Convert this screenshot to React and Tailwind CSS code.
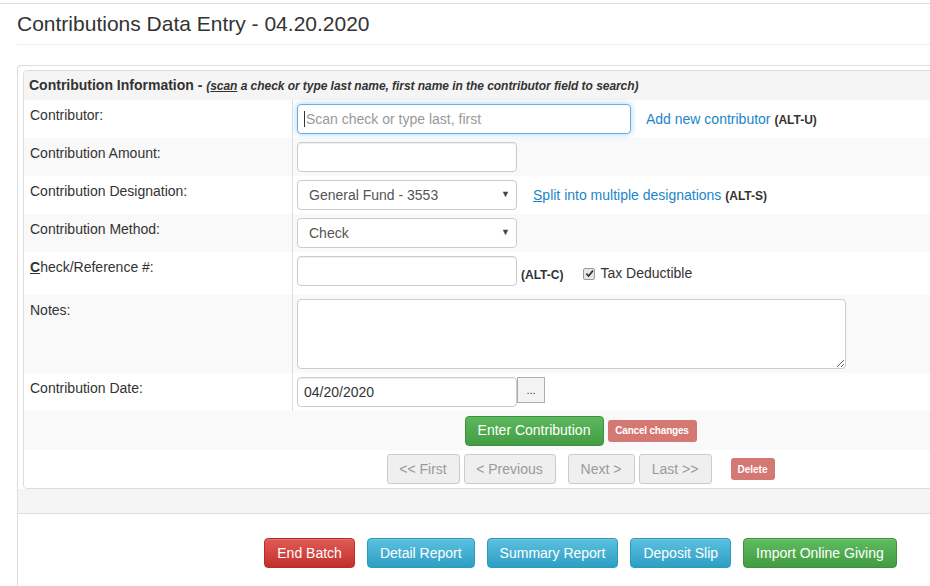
const font = { fontFamily: '"Liberation Sans", Arial, sans-serif' };

function Label({ children }) {
  return (
    <div className="w-[269px] shrink-0 border-r border-[#dddddd] pl-[6px] pt-[5px] text-[14px] leading-[20px] text-[#333]">
      {children}
    </div>
  );
}

function Row({ striped, h, label, children }) {
  return (
    <div className={`flex ${h} ${striped ? "bg-[#f9f9f9]" : "bg-white"}`}>
      <Label>{label}</Label>
      <div className="flex flex-1 items-start pl-[4px] pt-[4px]">{children}</div>
    </div>
  );
}

function Input({ w = "w-[220px]", value, className = "" }) {
  return (
    <div
      className={`${w} h-[30px] shrink-0 rounded-[4px] border border-[#cccccc] bg-white px-[6px] text-[14px] leading-[28px] text-[#333] shadow-[inset_0_1px_1px_rgba(0,0,0,0.075)] ${className}`}
    >
      {value}
    </div>
  );
}

function Select({ value }) {
  return (
    <div className="flex h-[30px] w-[220px] shrink-0 items-center justify-between rounded-[4px] border border-[#cccccc] bg-white pl-[11px] pr-[6px] text-[14px] text-[#555]">
      <span>{value}</span>
      <span className="text-[9px] text-[#444]">▼</span>
    </div>
  );
}

function Alt({ children }) {
  return <span className="text-[12px] font-bold text-[#333]">{children}</span>;
}

function NavBtn({ children, w }) {
  return (
    <div
      className={`${w} flex h-[30px] items-center justify-center rounded-[3px] border border-[#cccccc] bg-[#efefef] text-[14px] text-[#9a9a9a]`}
    >
      {children}
    </div>
  );
}

function BigBtn({ children, kind }) {
  const styles = {
    red: "bg-gradient-to-b from-[#e05a56] to-[#c32f2b] border-[#b92c28]",
    blue: "bg-gradient-to-b from-[#5bc0de] to-[#2c9fc5] border-[#2a9ac0]",
    green: "bg-gradient-to-b from-[#5fbc5f] to-[#429c42] border-[#3e8f3e]",
  };
  return (
    <div
      className={`flex h-[30px] items-center rounded-[4px] border px-[12px] text-[14px] text-white shadow-[inset_0_1px_0_rgba(255,255,255,0.15)] ${styles[kind]}`}
    >
      {children}
    </div>
  );
}

export default function App() {
  return (
    <div style={font} className="w-[1160px] bg-white text-[#333]">
      <div className="h-[4px] border-b border-[#dddddd]" />
      <div className="pl-[17px]">
        <div className="flex h-[41px] items-center border-b border-[#eeeeee]">
          <h1 className="text-[21px] leading-[24px] text-[#333]">Contributions Data Entry - 04.20.2020</h1>
        </div>

        <div className="mt-[20px] w-[1126px] rounded-tl-[4px] border-l border-t border-[#dddddd]">
          <div className="px-[5px] pt-[4px]">
            <div className="overflow-hidden rounded-[4px] border border-[#dddddd] bg-white">
              <div className="flex h-[29px] items-center bg-[#f5f5f5] pl-[5px]">
                <span className="text-[14px] font-bold text-[#333]">Contribution Information -&nbsp;</span>
                <span className="text-[12px] font-bold italic tracking-[-0.05px] text-[#333]">
                  (<span className="underline">scan</span> a check or type last name, first name in the contributor field to search)
                </span>
              </div>

              <Row h="h-[38px]" label="Contributor:">
                <div className="flex h-[30px] w-[334px] shrink-0 items-center rounded-[4px] border border-[#66afe9] bg-white px-[6px] text-[14px] shadow-[0_0_6px_rgba(102,175,233,0.6)]">
                  <span className="mr-[1px] h-[16px] w-px bg-[#333]" />
                  <span className="text-[#999]">Scan check or type last, first</span>
                </div>
                <div className="ml-[15px] mt-[5px] text-[14px]">
                  <span className="text-[#1b86c9]">Add new contributor</span> <Alt>(ALT-U)</Alt>
                </div>
              </Row>

              <Row striped h="h-[38px]" label="Contribution Amount:">
                <Input />
              </Row>

              <Row h="h-[38px]" label="Contribution Designation:">
                <Select value="General Fund - 3553" />
                <div className="ml-[16px] mt-[5px] text-[14px]">
                  <span className="text-[#1b86c9]">
                    <span className="underline">S</span>plit into multiple designations
                  </span>{" "}
                  <Alt>(ALT-S)</Alt>
                </div>
              </Row>

              <Row striped h="h-[38px]" label="Contribution Method:">
                <Select value="Check" />
              </Row>

              <Row
                h="h-[43px]"
                label={
                  <span>
                    <span className="font-bold underline">C</span>heck/Reference #:
                  </span>
                }
              >
                <Input />
                <div className="ml-[4px] mt-[6px]">
                  <Alt>(ALT-C)</Alt>
                </div>
                <div className="ml-[20px] mt-[7px] flex items-center text-[14px] text-[#333]">
                  <span className="mr-[5px] flex h-[12px] w-[12px] items-center justify-center rounded-[2px] border border-[#9a9a9a] bg-[#e6e6e6]">
                    <svg width="9" height="9" viewBox="0 0 10 10">
                      <path d="M1.5 5.2 L4 7.8 L8.8 1.8" fill="none" stroke="#333" strokeWidth="1.8" />
                    </svg>
                  </span>
                  Tax Deductible
                </div>
              </Row>

              <Row striped h="h-[78px]" label="Notes:">
                <textarea className="h-[70px] w-[549px] rounded-[4px] border border-[#cccccc] bg-white" />
              </Row>

              <Row h="h-[38px]" label="Contribution Date:">
                <Input value="04/20/2020" />
                <div className="flex h-[26px] w-[28px] items-center justify-center border border-[#adadad] bg-[#f3f3f3] text-[11px] leading-[12px] text-[#333]">
                  ...
                </div>
              </Row>

              <div className="flex h-[39px] items-center justify-center gap-[4px] bg-[#f9f9f9]">
                <div className="flex h-[30px] w-[139px] items-center justify-center rounded-[4px] border border-[#3e8f3e] bg-gradient-to-b from-[#5cb85c] to-[#449d44] text-[14px] text-white">
                  Enter Contribution
                </div>
                <div className="flex h-[22px] w-[89px] items-center justify-center rounded-[3px] bg-[#d47874] text-[10px] font-bold tracking-[-0.2px] text-white">
                  Cancel changes
                </div>
              </div>

              <div className="flex h-[38px] items-center justify-center bg-white">
                <NavBtn w="w-[73px]">&lt;&lt; First</NavBtn>
                <div className="ml-[4px]">
                  <NavBtn w="w-[92px]">&lt; Previous</NavBtn>
                </div>
                <div className="ml-[12px]">
                  <NavBtn w="w-[67px]">Next &gt;</NavBtn>
                </div>
                <div className="ml-[4px]">
                  <NavBtn w="w-[73px]">Last &gt;&gt;</NavBtn>
                </div>
                <div className="ml-[19px] flex h-[22px] w-[44px] items-center justify-center rounded-[3px] bg-[#d47874] text-[10px] font-bold text-white">
                  Delete
                </div>
              </div>
            </div>
          </div>
          <div className="h-[25px] border-b border-[#dddddd] bg-[#f5f5f5]" />
          <div className="flex h-[80px] justify-center gap-[12px] pt-[24px]">
            <BigBtn kind="red">End Batch</BigBtn>
            <BigBtn kind="blue">Detail Report</BigBtn>
            <BigBtn kind="blue">Summary Report</BigBtn>
            <BigBtn kind="blue">Deposit Slip</BigBtn>
            <BigBtn kind="green">Import Online Giving</BigBtn>
          </div>
        </div>
      </div>
    </div>
  );
}
